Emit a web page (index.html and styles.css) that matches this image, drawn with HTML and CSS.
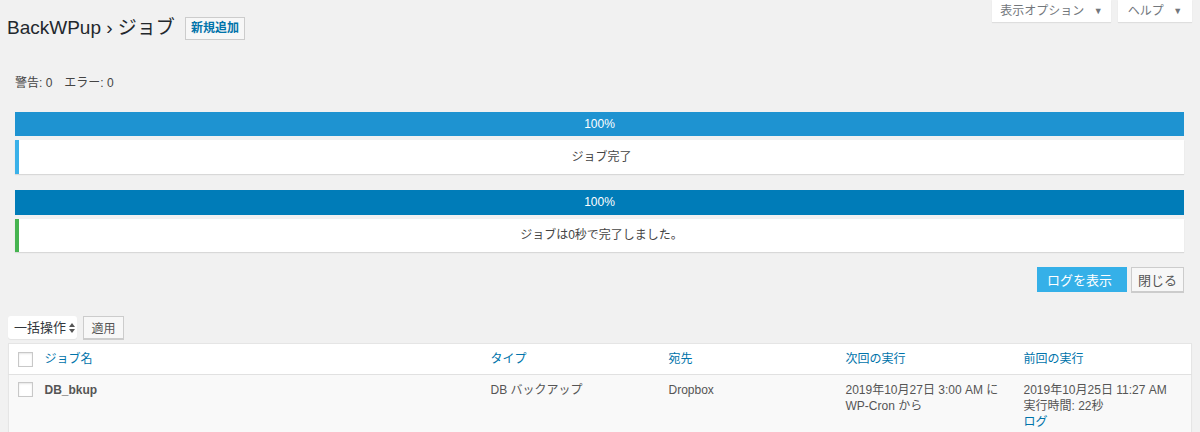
FILE: index.html
```html
<!DOCTYPE html>
<html lang="ja">
<head>
  <meta charset="UTF-8" />
  <title>BackWPup › ジョブ</title>
  <link rel="stylesheet" href="styles.css">
</head>
<body>
  <!-- Screen meta tabs -->
  <div class="screen-meta">
    <button class="meta-tab">表示オプション <span class="arrow">▼</span></button>
    <button class="meta-tab">ヘルプ <span class="arrow">▼</span></button>
  </div>

  <div class="wrap">
    <!-- Title -->
    <div class="page-head">
      <h1>BackWPup › ジョブ</h1>
      <a class="add-new" href="#">新規追加</a>
    </div>

    <!-- Running job -->
    <div class="runjob">
      <p class="counts">警告: 0　エラー: 0</p>

      <div class="progress light">100%</div>
      <div class="job-msg info">ジョブ完了</div>

      <div class="progress dark">100%</div>
      <div class="job-msg success">ジョブは0秒で完了しました。</div>

      <div class="job-actions">
        <button class="btn btn-log">ログを表示</button>
        <button class="btn btn-close">閉じる</button>
      </div>
    </div>

    <!-- Bulk actions -->
    <div class="tablenav">
      <div class="select">一括操作 <span class="updown"></span></div>
      <button class="btn btn-small">適用</button>
    </div>

    <!-- Jobs table -->
    <table class="jobs">
      <thead>
        <tr>
          <th class="cb"><span class="check"></span></th>
          <th class="col-name"><a href="#">ジョブ名</a></th>
          <th class="col-type"><a href="#">タイプ</a></th>
          <th class="col-dest"><a href="#">宛先</a></th>
          <th class="col-next"><a href="#">次回の実行</a></th>
          <th class="col-last"><a href="#">前回の実行</a></th>
        </tr>
      </thead>
      <tbody>
        <tr>
          <td class="cb"><span class="check"></span></td>
          <td><strong>DB_bkup</strong></td>
          <td>DB バックアップ</td>
          <td>Dropbox</td>
          <td>2019年10月27日 3:00 AM に<br>WP-Cron から</td>
          <td>2019年10月25日 11:27 AM<br>実行時間: 22秒<br><a href="#">ログ</a></td>
        </tr>
      </tbody>
    </table>
  </div>
</body>
</html>
```

FILE: styles.css
```css
/* ============================
   Basic Reset
   ============================ */
* {
  margin: 0;
  padding: 0;
  box-sizing: border-box;
}

body {
  background: #f1f1f1;
  color: #444;
  font-family: "Liberation Sans", "Noto Sans CJK JP", sans-serif;
  font-size: 12px;
  line-height: 1.4;
  height: 432px;
  overflow: hidden;
}

a {
  color: #0073aa;
  text-decoration: none;
}

/* ============================
   Screen meta tabs
   ============================ */
.screen-meta {
  position: absolute;
  top: 0;
  right: 8px;
  display: flex;
  gap: 7px;
}

.meta-tab {
  background: #fff;
  border: none;
  box-shadow: 0 1px 1px rgba(0, 0, 0, 0.08);
  font-family: inherit;
  font-size: 12px;
  color: #72777c;
  height: 22px;
  padding: 0;
  line-height: 22px;
  white-space: nowrap;
  text-align: center;
}

.meta-tab:first-child {
  width: 119px;
}

.meta-tab:last-child {
  width: 74px;
}

.arrow {
  font-size: 9px;
  margin-left: 6px;
  vertical-align: 1px;
}

/* ============================
   Wrap + title
   ============================ */
.wrap {
  padding: 0 8px;
}

.page-head {
  display: flex;
  align-items: center;
  padding-top: 14px;
  height: 42px;
}

h1 {
  font-size: 19px;
  font-weight: 400;
  color: #23282d;
  margin-left: -1px;
  line-height: 26px;
}

.add-new {
  margin-left: 10px;
  border: 1px solid #ccc;
  background: #f7f7f7;
  font-size: 12px;
  font-weight: 600;
  height: 23px;
  line-height: 21px;
  padding: 0 5px;
  margin-top: 1px;
}

/* ============================
   Running job
   ============================ */
.runjob {
  padding: 0 8px 0 7px;
  margin-top: 32px;
}

.counts {
  font-size: 12px;
  color: #444;
  height: 24px;
  line-height: 18px;
}

.progress {
  height: 24px;
  line-height: 24px;
  margin-top: 14px;
  color: #fff;
  text-align: center;
  font-size: 12px;
}

.progress.light {
  background: #1e93d1;
}

.progress.dark {
  background: #007cb8;
  margin-top: 16px;
  height: 25px;
}

.job-msg {
  margin-top: 4px;
  height: 34px;
  line-height: 34px;
  background: #fff;
  border-left: 4px solid #3ab1e9;
  box-shadow: 0 1px 1px rgba(0, 0, 0, 0.1);
  text-align: center;
  font-size: 12px;
  color: #444;
}

.job-msg.success {
  border-left-color: #46b450;
  height: 33px;
  line-height: 33px;
}

.job-actions {
  display: flex;
  justify-content: flex-end;
  gap: 4px;
  margin-top: 15px;
}

.btn {
  height: 25px;
  padding: 0 10px;
  border: 1px solid #ccc;
  background: #f7f7f7;
  box-shadow: 0 1px 0 #ccc;
  color: #555;
  font-family: inherit;
  font-size: 13px;
}

.btn-log {
  width: 90px;
  background: #35b0e8;
  border-color: #35b0e8;
  box-shadow: none;
  color: #fff;
  text-align: left;
  padding-left: 9px;
}

.btn-close {
  width: 53px;
  padding: 0;
}

/* ============================
   Bulk actions
   ============================ */
.tablenav {
  display: flex;
  gap: 6px;
  margin-top: 24px;
  height: 27px;
}

.select {
  width: 69px;
  height: 23px;
  background: #fff;
  border-radius: 3px;
  box-shadow: 0 1px 1px rgba(0, 0, 0, 0.06);
  font-size: 13px;
  color: #32373c;
  line-height: 23px;
  padding-left: 6px;
  display: flex;
  align-items: center;
  gap: 3px;
}

.updown {
  position: relative;
  width: 6px;
  height: 10px;
}

.updown::before,
.updown::after {
  content: "";
  position: absolute;
  left: 0;
  border-left: 3px solid transparent;
  border-right: 3px solid transparent;
}

.updown::before {
  top: 0;
  border-bottom: 4px solid #555;
}

.updown::after {
  bottom: 0;
  border-top: 4px solid #555;
}

.btn-small {
  height: 23px;
  width: 41px;
  padding: 0;
  font-size: 12px;
}

/* ============================
   Jobs table
   ============================ */
.jobs {
  width: 100%;
  border-collapse: collapse;
  background: #fff;
  box-shadow: 0 1px 1px rgba(0, 0, 0, 0.04);
  border: 1px solid #e5e5e5;
}

.jobs th {
  text-align: left;
  font-weight: 400;
  font-size: 12px;
  height: 31px;
  padding: 0 8px;
  border-bottom: 1px solid #e1e1e1;
}

.jobs td {
  vertical-align: top;
  padding: 7px 8px;
  font-size: 12px;
  color: #555;
  line-height: 16px;
}

.jobs tbody tr {
  background: #f9f9f9;
}

.jobs td strong {
  font-size: 12px;
  color: #555;
}

.jobs .cb {
  width: 28px;
  padding: 0 0 0 9px;
}

.jobs td.cb {
  padding-top: 7px;
}

.check {
  display: block;
  width: 15px;
  height: 15px;
  border: 1px solid #c8c8c8;
  background: #fff;
  box-shadow: inset 0 1px 2px rgba(0, 0, 0, 0.1);
}

.col-name { width: 446px; }
.col-type { width: 178px; }
.col-dest { width: 177px; }
.col-next { width: 178px; }
```
